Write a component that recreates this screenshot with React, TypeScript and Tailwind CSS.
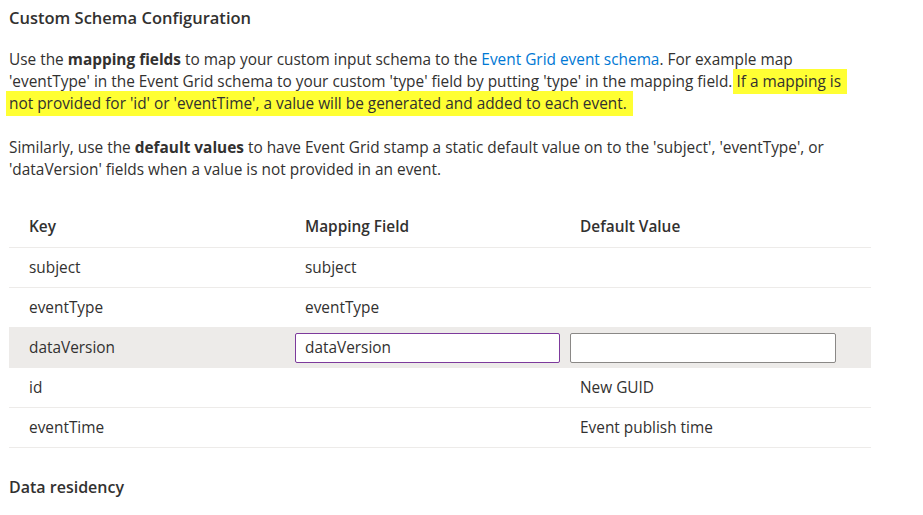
import React from "react";

const font = { fontFamily: '"Open Sans", "Noto Sans", sans-serif' };

function Row({
  k,
  m,
  d,
  active,
}: {
  k: string;
  m?: string;
  d?: string;
  active?: boolean;
}) {
  return (
    <div
      className={`grid grid-cols-[286px_275px_1fr] h-10 items-center border-b border-[#edebe9] ${
        active ? "bg-[#edebe9]" : ""
      }`}
    >
      <div className="pl-5">{k}</div>
      {active ? (
        <>
          <div className="pr-[10px]">
            <div className="h-[30px] border border-[#7d3a9c] rounded-[2px] bg-white pl-[9px] flex items-center">
              dataVersion
            </div>
          </div>
          <div className="pr-[35px]">
            <div className="h-[30px] border border-[#8a8886] rounded-[2px] bg-white" />
          </div>
        </>
      ) : (
        <>
          <div className="pl-[10px]">{m}</div>
          <div className="pl-[10px]">{d}</div>
        </>
      )}
    </div>
  );
}

export default function App() {
  return (
    <div
      className="w-[923px] h-[515px] bg-white text-[#323130] text-[15.4px] pl-[9px] overflow-hidden"
      style={font}
    >
      <div className="pt-[6px] text-[16.5px] font-semibold leading-6">
        Custom Schema Configuration
      </div>
      <p className="mt-[19px] leading-[22px] whitespace-nowrap">
        Use the <b className="font-bold">mapping fields</b> to map your custom input schema to the{" "}
        <span className="text-[#0078d4]">Event Grid event schema</span>. For example map
        <br />
        'eventType' in the Event Grid schema to your custom 'type' field by putting 'type' in the mapping
        field.{" "}
        <span className="bg-[#ffff33] box-decoration-clone py-[2px] -ml-[3px] pl-[3px] pr-[6px]">
          If a mapping is
          <br />
          <span className="-ml-[4px] pl-[4px]">not provided for 'id' or 'eventTime', a value will be generated and added to each event.</span>
        </span>
      </p>
      <p className="mt-[22px] leading-[22px] whitespace-nowrap">
        Similarly, use the <b className="font-bold">default values</b> to have Event Grid stamp a static
        default value on to the 'subject', 'eventType', or
        <br />
        'dataVersion' fields when a value is not provided in an event.
      </p>
      <div className="mt-[25px] w-[862px]">
        <div className="grid grid-cols-[286px_275px_1fr] h-[42px] items-center border-b border-[#edebe9] font-semibold">
          <div className="pl-5">Key</div>
          <div className="pl-[10px]">Mapping Field</div>
          <div className="pl-[10px]">Default Value</div>
        </div>
        <Row k="subject" m="subject" />
        <Row k="eventType" m="eventType" />
        <Row k="dataVersion" active />
        <Row k="id" d="New GUID" />
        <Row k="eventTime" d="Event publish time" />
      </div>
      <div className="mt-[27px] text-[16px] font-semibold leading-6">Data residency</div>
    </div>
  );
}
